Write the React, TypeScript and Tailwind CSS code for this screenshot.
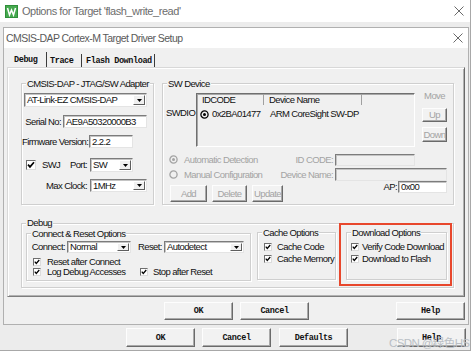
import React from "react";

const ui =
  "font-['Liberation_Sans',Arial,sans-serif]";

const mono =
  "font-['Liberation_Mono','Courier_New',monospace] font-bold text-[8.5px] tracking-[-0.4px]";

function CloseX() {
  return (
    <svg width="10" height="10" viewBox="0 0 10 10">
      <path d="M0.5 0.5 L9.5 9.5 M9.5 0.5 L0.5 9.5" stroke="#6a6a6a" strokeWidth="1" />
    </svg>
  );
}

function KeilIcon() {
  return (
    <svg width="13" height="13" viewBox="0 0 13 13">
      <rect x="0" y="0" width="13" height="13" fill="#2f8f3a" />
      <rect x="1" y="1" width="11" height="11" fill="#46a94f" />
      <path d="M2.5 3 L4.5 10 L6.5 5 L8.5 10 L10.5 3" stroke="#fff" strokeWidth="1.5" fill="none" />
    </svg>
  );
}

function Box({
  className = "",
  bg = "bg-white",
  children,
}: {
  className?: string;
  bg?: string;
  children?: React.ReactNode;
}) {
  return (
    <div
      className={
        "flex items-center shrink-0 border border-t-[#7c7c7c] border-l-[#7c7c7c] border-r-[#e4e4e4] border-b-[#e4e4e4] shadow-[inset_1px_1px_0_#c4c4c4] pl-[2px] overflow-hidden whitespace-nowrap " +
        bg +
        " " +
        className
      }
    >
      {children}
    </div>
  );
}

function Combo({ className = "", text }: { className?: string; text: string }) {
  return (
    <Box className={className}>
      <span className="flex-1">{text}</span>
      <div className="self-stretch my-[1px] mr-[1px] w-[12px] bg-[#f0f0f0] border border-t-[#fff] border-l-[#fff] border-r-[#5e5e5e] border-b-[#5e5e5e] flex items-center justify-center">
        <svg width="5" height="3" viewBox="0 0 5 3">
          <path d="M0 0 H5 L2.5 3 Z" fill="#000" />
        </svg>
      </div>
    </Box>
  );
}

function Check({ size = "w-[8px] h-[8px]" }: { size?: string }) {
  return (
    <div
      className={
        "shrink-0 bg-white border border-t-[#6e6e6e] border-l-[#6e6e6e] border-r-[#dcdcdc] border-b-[#dcdcdc] " +
        size
      }
    >
      <svg className="w-full h-full block" viewBox="0 0 8 8">
        <path d="M1 3.6 L3 5.9 L7 1.3" stroke="#000" strokeWidth="1.7" fill="none" />
      </svg>
    </div>
  );
}

function Radio({ on, color }: { on: boolean; color: string }) {
  return (
    <svg width="9" height="9" viewBox="0 0 9 9" className="shrink-0">
      <circle cx="4.5" cy="4.5" r="3.6" fill="none" stroke={color} strokeWidth="1.3" />
      {on && <circle cx="4.5" cy="4.5" r="1.5" fill={color} />}
    </svg>
  );
}

function Btn({ className = "", children }: { className?: string; children?: React.ReactNode }) {
  return (
    <div
      className={
        "flex items-center justify-center shrink-0 bg-[#f2f2f2] border border-t-[#fdfdfd] border-l-[#fdfdfd] border-r-[#6a6a6a] border-b-[#6a6a6a] shadow-[inset_-1px_-1px_0_#a9a9a9] " +
        className
      }
    >
      {children}
    </div>
  );
}

function Group({
  label,
  className = "",
  labelTop = "top-[-5px]",
  children,
}: {
  label: string;
  className?: string;
  labelTop?: string;
  children?: React.ReactNode;
}) {
  return (
    <div
      className={
        "relative shrink-0 border border-[#cfcfcf] shadow-[inset_1px_1px_0_#fff,1px_1px_0_#fff] " +
        className
      }
    >
      <span
        className={
          "absolute left-[4px] bg-[#f0f0f0] px-[1px] leading-[9px] whitespace-nowrap " + labelTop
        }
      >
        {label}
      </span>
      {children}
    </div>
  );
}

export default function App() {
  return (
    <div
      className={
        "w-[474px] h-[354px] bg-white overflow-hidden text-[9.5px] tracking-[-0.6px] leading-[12px] text-[#111] " + ui
      }
    >
      <div className="w-[471px] h-[351px] flex flex-col border-r border-b border-[#a8a8a8]">

        {/* OUTER TITLE */}
        <div className="h-[22px] shrink-0 bg-white flex items-center pl-[5px] pr-[6px]">
          <KeilIcon />
          <span className="ml-[4px] text-[11px] tracking-[-0.45px] text-[#6d6d6d]">
            Options for Target 'flash_write_read'
          </span>
          <span className="ml-auto flex">
            <CloseX />
          </span>
        </div>

        {/* OUTER BODY */}
        <div className="relative flex-1 bg-[#ececec] flex flex-col pt-[5px]">

          {/* INNER DIALOG */}
          <div className="ml-[3px] w-[466px] h-[298px] shrink-0 border border-[#b0b0b0] bg-[#f0f0f0] flex flex-col">

            <div className="h-[20px] shrink-0 bg-white flex items-center pl-[2px] pr-[5px]">
              <span className="text-[10.5px] tracking-[-0.55px] text-[#5a5a5a]">
                CMSIS-DAP Cortex-M Target Driver Setup
              </span>
              <span className="ml-auto flex">
                <CloseX />
              </span>
            </div>

            {/* TABS */}
            <div className={"mt-[4px] h-[15px] shrink-0 flex items-end pl-[8px] " + mono}>
              <div className="w-[35px] h-[15px] pl-[2px] flex items-center border-r border-[#3c3c3c]">
                Debug
              </div>
              <div className="w-[35px] h-[13px] pl-[3px] flex items-center border-r border-[#3c3c3c]">
                Trace
              </div>
              <div className="w-[73px] h-[13px] pl-[4px] flex items-center border-r border-[#3c3c3c]">
                Flash Download
              </div>
            </div>

            {/* PANEL */}
            <div className="ml-[3px] w-[458px] h-[230px] shrink-0 border border-t-[#d8d8d8] border-l-[#d8d8d8] border-r-[#696969] border-b-[#7d7d7d] shadow-[inset_1px_1px_0_#fff,inset_-1px_-1px_0_#b2b2b2] pt-[15px] pl-[13px]">

              <div className="flex">

                {/* ADAPTER */}
                <Group label="CMSIS-DAP - JTAG/SW Adapter" className="w-[133px] h-[122px]">
                  <Combo className="mt-[9px] ml-[2px] w-[123px] h-[14px]" text="AT-Link-EZ CMSIS-DAP" />

                  <div className="mt-[8px] h-[13px] flex items-center">
                    <span className="w-[39px] text-right whitespace-nowrap">Serial No:</span>
                    <Box className="ml-[2px] w-[84px] h-[13px]">AE9A50320000B3</Box>
                  </div>

                  <div className="mt-[7px] h-[13px] flex items-center">
                    <span className="w-[65px] text-right whitespace-nowrap">Firmware Version:</span>
                    <Box className="ml-[2px] w-[44px] h-[13px]">2.2.2</Box>
                  </div>

                  <div className="mt-[10px] h-[14px] flex items-center">
                    <div className="w-[65px] pl-[4px] flex items-center">
                      <Check size="w-[10px] h-[10px]" />
                      <span className="ml-[6px]">SWJ</span>
                      <span className="ml-auto">Port:</span>
                    </div>
                    <Combo className="ml-[3px] w-[43px] h-[14px]" text="SW" />
                  </div>

                  <div className="mt-[7px] h-[13px] flex items-center">
                    <span className="w-[65px] text-right whitespace-nowrap">Max Clock:</span>
                    <Combo className="ml-[3px] w-[57px] h-[13px]" text="1MHz" />
                  </div>
                </Group>

                {/* SW DEVICE */}
                <Group label="SW Device" className="ml-[8px] w-[292px] h-[122px]">
                  <div className="mt-[9px] flex">
                    <div className="w-[33px] pl-[3px] pt-[14px] whitespace-nowrap">SWDIO</div>

                    <div className="w-[219px] h-[54px] shrink-0 border border-t-[#6f6f6f] border-l-[#6f6f6f] border-r-[#fff] border-b-[#fff] shadow-[inset_1px_1px_0_#a7a7a7]">
                      <div className="flex h-[11px] leading-[11px]">
                        <div className="w-[67px] pl-[5px] border-r border-[#a0a0a0]">IDCODE</div>
                        <div className="w-[98px] pl-[5px] border-r border-[#a0a0a0]">Device Name</div>
                      </div>
                      <div className="mt-[3px] h-[12px] flex items-center">
                        <div className="w-[67px] pl-[3px] flex items-center">
                          <Radio on color="#000" />
                          <span className="ml-[3px]">0x2BA01477</span>
                        </div>
                        <span className="pl-[6px] whitespace-nowrap">ARM CoreSight SW-DP</span>
                      </div>
                    </div>

                    <div className="ml-[7px] w-[25px] -mt-[3px] flex flex-col text-[#a3a3a3]">
                      <span className="text-center leading-[12px]">Move</span>
                      <Btn className="mt-[6px] h-[14px]">Up</Btn>
                      <Btn className="mt-[5px] h-[15px]">Down</Btn>
                    </div>
                  </div>

                  {/* DETECTION ROWS */}
                  <div className="mt-[6px] h-[13px] flex items-center">
                    <div className="pl-[6px] flex items-center text-[#a3a3a3]">
                      <Radio on color="#a3a3a3" />
                      <span className="ml-[6px] whitespace-nowrap">Automatic Detection</span>
                    </div>
                    <div className="ml-auto mr-[38px] flex items-center">
                      <span className="text-[#a3a3a3] whitespace-nowrap">ID CODE:</span>
                      <Box bg="bg-[#f0f0f0]" className="ml-[2px] w-[80px] h-[12px]" />
                    </div>
                  </div>

                  <div className="mt-[2px] h-[13px] flex items-center">
                    <div className="pl-[6px] flex items-center text-[#a3a3a3]">
                      <Radio on={false} color="#a3a3a3" />
                      <span className="ml-[6px] whitespace-nowrap">Manual Configuration</span>
                    </div>
                    <div className="ml-auto mr-[6px] flex items-center">
                      <span className="text-[#a3a3a3] whitespace-nowrap">Device Name:</span>
                      <Box bg="bg-[#f0f0f0]" className="ml-[2px] w-[112px] h-[13px]" />
                    </div>
                  </div>

                  <div className="flex items-start">
                    <div className="mt-[4px] pl-[7px] flex text-[#a3a3a3]">
                      <Btn className="w-[37px] h-[17px]">Add</Btn>
                      <Btn className="ml-[5px] w-[35px] h-[17px]">Delete</Btn>
                      <Btn className="ml-[5px] w-[31px] h-[17px]">Update</Btn>
                    </div>
                    <div className="ml-auto mr-[6px] h-[12px] flex items-center">
                      <span>AP:</span>
                      <Box className="ml-[1px] w-[49px] h-[12px]">0x00</Box>
                    </div>
                  </div>
                </Group>
              </div>

              {/* DEBUG */}
              <Group label="Debug" labelTop="top-[-6px]" className="mt-[18px] w-[433px] h-[65px]">
                <div className="flex items-start">

                  <Group label="Connect & Reset Options" className="ml-[4px] mt-[9px] w-[225px] h-[48px]">
                    <div className="mt-[7px] h-[12px] flex items-center">
                      <span className="w-[38px] text-right">Connect:</span>
                      <Combo className="ml-[2px] w-[64px] h-[12px]" text="Normal" />
                      <span className="ml-[7px] w-[26px]">Reset:</span>
                      <Combo className="w-[80px] h-[12px]" text="Autodetect" />
                    </div>
                    <div className="mt-[4px] h-[10px] pl-[6px] flex items-center">
                      <Check />
                      <span className="ml-[6px] whitespace-nowrap">Reset after Connect</span>
                    </div>
                    <div className="h-[10px] pl-[6px] flex items-center">
                      <div className="w-[107px] flex items-center">
                        <Check />
                        <span className="ml-[6px] whitespace-nowrap">Log Debug Accesses</span>
                      </div>
                      <Check />
                      <span className="ml-[5px] whitespace-nowrap">Stop after Reset</span>
                    </div>
                  </Group>

                  <Group label="Cache Options" className="ml-[6px] mt-[8px] w-[79px] h-[48px]">
                    <div className="mt-[9px] h-[10px] pl-[6px] flex items-center">
                      <Check />
                      <span className="ml-[5px] whitespace-nowrap">Cache Code</span>
                    </div>
                    <div className="mt-[2px] h-[10px] pl-[6px] flex items-center">
                      <Check />
                      <span className="ml-[5px] whitespace-nowrap">Cache Memory</span>
                    </div>
                  </Group>

                  <Group label="Download Options" className="ml-[10px] mt-[8px] w-[101px] h-[48px]">
                    <div className="mt-[9px] h-[10px] pl-[4px] flex items-center">
                      <Check />
                      <span className="ml-[3px] whitespace-nowrap">Verify Code Download</span>
                    </div>
                    <div className="mt-[2px] h-[10px] pl-[4px] flex items-center">
                      <Check />
                      <span className="ml-[3px] whitespace-nowrap">Download to Flash</span>
                    </div>
                  </Group>
                </div>

                {/* RED MARK */}
                <div className="absolute left-[317px] top-[-1px] w-[113px] h-[63px] border-2 border-[#e8472c]" />
              </Group>
            </div>

            {/* INNER BUTTONS */}
            <div className={"mt-[5px] flex " + mono}>
              <Btn className="ml-[160px] w-[69px] h-[18px]">OK</Btn>
              <Btn className="ml-[7px] w-[69px] h-[18px]">Cancel</Btn>
              <Btn className="ml-auto mr-[3px] w-[69px] h-[18px]">Help</Btn>
            </div>
          </div>

          {/* OUTER BUTTONS */}
          <div className={"mt-[3px] flex " + mono}>
            <Btn className="ml-[126px] w-[69px] h-[19px]">OK</Btn>
            <Btn className="ml-[7px] w-[69px] h-[19px]">Cancel</Btn>
            <Btn className="ml-[8px] w-[69px] h-[19px]">Defaults</Btn>
            <Btn className="ml-[49px] w-[69px] h-[19px]">Help</Btn>
          </div>

          {/* WATERMARK */}
          <span className="absolute left-[389px] top-[314px] text-[11.5px] tracking-[-0.6px] leading-[14px] text-[#b9bec4] whitespace-nowrap font-['Liberation_Sans','Noto_Sans_CJK_SC',sans-serif]">
            CSDN @绿色HS
          </span>
        </div>
      </div>
    </div>
  );
}
